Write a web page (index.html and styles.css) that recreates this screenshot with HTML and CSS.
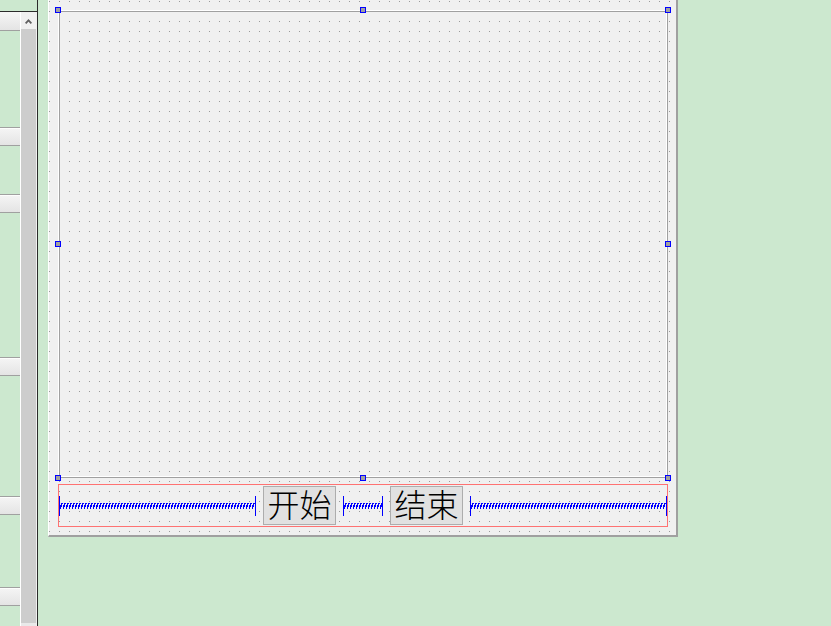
FILE: index.html
```html
<!DOCTYPE html>
<html lang="zh">
<head>
<meta charset="utf-8">
<title>Designer</title>
<link rel="stylesheet" href="styles.css">
</head>
<body>
<div class="app">
  <aside class="sidebar">
    <div class="sidebar-top"></div>
    <div class="sidebar-body">
      <div class="toolbox">
        <div class="cat cat-first"></div>
        <div class="cat cat-2"></div>
        <div class="cat cat-3"></div>
        <div class="cat cat-4"></div>
        <div class="cat cat-5"></div>
        <div class="cat cat-6"></div>
      </div>
      <div class="scrollbar">
        <div class="sb-up">
          <svg width="7" height="5" viewBox="0 0 7 5"><polyline points="0.6,4.4 3.5,1.4 6.4,4.4" fill="none" stroke="#606060" stroke-width="1.8"/></svg>
        </div>
        <div class="sb-track"></div>
        <div class="sb-down"></div>
      </div>
    </div>
  </aside>
  <div class="gutter"></div>
  <div class="form">
    <div class="central">
      <span class="handle h-tl"></span>
      <span class="handle h-tc"></span>
      <span class="handle h-tr"></span>
      <span class="handle h-ml"></span>
      <span class="handle h-mr"></span>
      <span class="handle h-bl"></span>
      <span class="handle h-bc"></span>
      <span class="handle h-br"></span>
    </div>
    <div class="hlayout">
      <div class="spacer sp-side"><div class="coil"></div></div>
      <button class="btn">开始</button>
      <div class="spacer sp-mid"><div class="coil"></div></div>
      <button class="btn">结束</button>
      <div class="spacer sp-side"><div class="coil"></div></div>
    </div>
  </div>
</div>
</body>
</html>
```
FILE: styles.css
```css
* { box-sizing: border-box; }
html, body {
  margin: 0;
  padding: 0;
  width: 831px;
  height: 626px;
  overflow: hidden;
  background: #cce8cf;
  font-family: "Noto Sans CJK SC", "Noto Sans", sans-serif;
}
.app {
  display: flex;
  align-items: flex-start;
  height: 626px;
}
.sidebar {
  width: 38px;
  height: 626px;
  border-right: 1px solid #2b2b2b;
  display: flex;
  flex-direction: column;
}
.sidebar-top {
  height: 12px;
  border-bottom: 1px solid #2b2b2b;
}
.sidebar-body {
  display: flex;
  flex: 1;
  overflow: hidden;
}
.toolbox {
  width: 20px;
  display: flex;
  flex-direction: column;
}
.cat {
  height: 19px;
  border-top: 1px solid #a0a0a0;
  border-bottom: 1px solid #a0a0a0;
  background: linear-gradient(#fdfdfd 0 1px, #f4f4f4 1px, #e4e4e4);
}
.cat-first { border-top: none; background: linear-gradient(#f6f6f6, #e4e4e4); }
.cat-2 { margin-top: 96px; }
.cat-3 { margin-top: 48px; }
.cat-4 { margin-top: 144px; }
.cat-5 { margin-top: 120px; }
.cat-6 { margin-top: 72px; }
.scrollbar {
  width: 17px;
  display: flex;
  flex-direction: column;
  border-left: 1px solid #ffffff;
  border-right: 1px solid #f0f0f0;
  background: #cdcdcd;
}
.sb-up {
  height: 17px;
  flex: none;
  background: #f0f0f0;
  display: flex;
  justify-content: center;
  padding-top: 7px;
}
.sb-up svg { display: block; }
.sb-track {
  height: 594px;
  flex: none;
  background: #cdcdcd;
}
.sb-down {
  height: 17px;
  flex: none;
  background: #e9e9e9;
}
.gutter {
  width: 10px;
  flex: none;
}
.form {
  width: 630px;
  height: 537px;
  flex: none;
  border-left: 1px solid #ffffff;
  border-right: 2px solid #a0a0a0;
  border-bottom: 2px solid #a0a0a0;
  background-color: #f0f0f0;
  background-image: conic-gradient(from 270deg at 1px 1px, #9a9a9a 25%, transparent 0);
  background-size: 10px 10px;
  background-position: 0 1px;
  padding: 10px 0 0 9px;
}
.central {
  position: relative;
  width: 610px;
  height: 468px;
  box-shadow:
    inset 1px 1px 0 #ffffff,
    inset 2px 2px 0 #a0a0a0,
    inset -1px -1px 0 #a0a0a0,
    inset -2px -2px 0 #ffffff;
}
.handle {
  position: absolute;
  width: 6px;
  height: 6px;
  border: 1px solid #0000ff;
  background: #a0a0a0;
}
.h-tl { left: -3px; top: -3px; }
.h-tc { left: calc(50% - 3px); top: -3px; }
.h-tr { left: calc(100% - 3px); top: -3px; }
.h-ml { left: -3px; top: calc(50% - 3px); }
.h-mr { left: calc(100% - 3px); top: calc(50% - 3px); }
.h-bl { left: -3px; top: calc(100% - 3px); }
.h-bc { left: calc(50% - 3px); top: calc(100% - 3px); }
.h-br { left: calc(100% - 3px); top: calc(100% - 3px); }
.hlayout {
  margin-top: 6px;
  width: 610px;
  height: 43px;
  border: 1px solid #ff7272;
  display: flex;
  align-items: center;
  gap: 7px;
}
.spacer {
  height: 20px;
  border-left: 1px solid #0000ff;
  border-right: 1px solid #0000ff;
  display: flex;
  align-items: center;
  flex: none;
}
.sp-side { width: 197px; }
.sp-mid { width: 40px; }
.coil {
  width: 100%;
  height: 6px;
  margin-top: 1px;
  background-image:
    linear-gradient(to right, #0000ff 0 1px, transparent 1px),
    linear-gradient(to right, transparent 0 1px, #0000ff 1px 2px, transparent 2px),
    linear-gradient(to right, transparent 0 2px, #0000ff 2px 3px);
  background-size: 3px 4px, 3px 4px, 3px 1px;
  background-position: 0 2px, 0 0, 0 0;
  background-repeat: repeat-x, repeat-x, repeat-x;
}
.btn {
  width: 73px;
  height: 39px;
  flex: none;
  margin: 0;
  padding: 0 0 4px 0;
  border: 1px solid #adadad;
  background: #e1e1e1;
  color: #000000;
  font-family: "Noto Sans CJK SC", "Noto Sans", sans-serif;
  font-size: 32px;
  font-weight: 300;
  line-height: 33px;
  display: flex;
  align-items: center;
  justify-content: center;
}
```
